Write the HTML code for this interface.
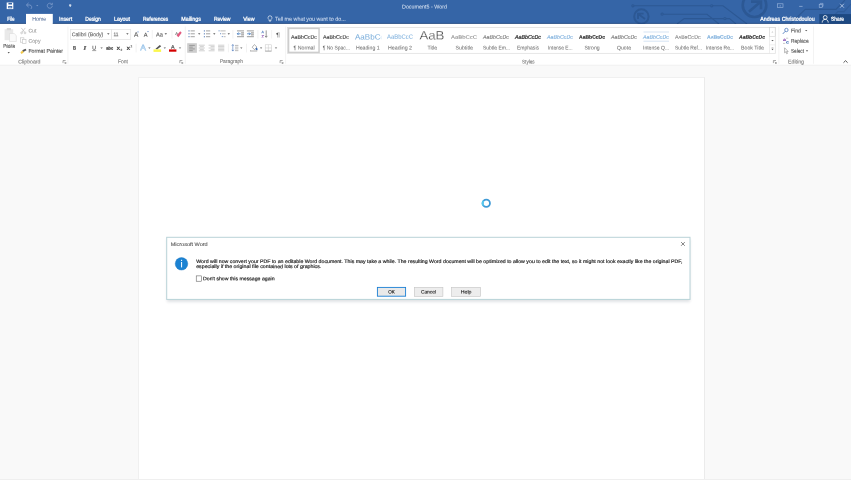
<!DOCTYPE html>
<html lang="en"><head><meta charset="utf-8"><title>Document5 - Word</title>
<style>
html,body{margin:0;padding:0;background:#f9f9f9;overflow:hidden}
svg{display:block;font-family:"Liberation Sans", sans-serif;will-change:transform;transform:translateZ(0)}
text{white-space:pre}
</style></head><body>
<svg width="851" height="480" viewBox="0 0 851 480">
<rect x="0.00" y="0.00" width="851.00" height="480.00" fill="#f9f9f9" />
<rect x="0.00" y="0.00" width="851.00" height="23.70" fill="#3565a7" />
<g fill="none" stroke="#2c5894" stroke-width="1.1">
<circle cx="632.9" cy="5.8" r="1.1"/>
<path d="M634.1 5.8H710.5M712.9 5.8H723L747 24"/>
<circle cx="711.7" cy="5.8" r="1.1"/>
<circle cx="641.4" cy="16.5" r="7.2" stroke-width="2"/>
<path d="M645 19L638.6 14.2M638 19V13.6H643.6" stroke-width="1.9"/>
<circle cx="662.1" cy="14.1" r="1.1"/>
<path d="M663.3 14.3H707L719 24"/>
<path d="M677 24L684.2 18.6H723.7M726.1 18.6H729.5L736 24"/>
<circle cx="724.9" cy="18.6" r="1.1"/>
<circle cx="754.5" cy="5.2" r="11.8" stroke-width="2.6"/>
<path d="M748.9 11.7L760 2.2M751 1.6H761V9.2" stroke-width="2.6"/>
<path d="M790 24L805.3 9.4H835.9L845 0"/>
<path d="M851 4L844 11.6H838L826 24" opacity="0.7"/>
</g>
<rect x="819.30" y="14.10" width="32.00" height="9.90" fill="#1d4982" />
<rect x="26.00" y="13.90" width="26.80" height="10.50" fill="#fff" />
<rect x="0.00" y="24.00" width="851.00" height="41.00" fill="#fff" />
<line x1="0.00" y1="23.40" x2="26.00" y2="23.40" stroke="#2a4d80" stroke-width="0.8" />
<line x1="52.80" y1="23.40" x2="851.00" y2="23.40" stroke="#2a4d80" stroke-width="0.8" />
<line x1="0.00" y1="65.20" x2="851.00" y2="65.20" stroke="#efefef" stroke-width="0.8" />
<rect x="6.70" y="2.50" width="6.60" height="6.60" fill="#fff" />
<rect x="8.40" y="3.00" width="3.60" height="1.50" fill="#3565a7" />
<rect x="8.20" y="6.00" width="4.00" height="2.30" fill="#3565a7" />
<rect x="8.90" y="6.90" width="2.60" height="0.50" fill="#fff" />
<path d="M28.6 2.9L26.4 5L28.6 7.1M26.6 5H29.8a2.2 2.2 0 0 1 1.1 3.9" fill="none" stroke="#7d9ccc" stroke-width="0.85" />
<path d="M36.11 4.95h2.175l-1.09 1.35z" fill="#7d9ccc" />
<path d="M51.6 4 A2.5 2.5 0 1 0 52.3 5.8" fill="none" stroke="#7d9ccc" stroke-width="0.8" />
<path d="M52.3 2.8V4.6H50.5" fill="none" stroke="#7d9ccc" stroke-width="0.8" />
<line x1="69.20" y1="4.60" x2="71.20" y2="4.60" stroke="#fff" stroke-width="0.6" />
<path d="M68.82 5.37h2.755l-1.38 1.71z" fill="#fff" />
<text x="7.30" y="20.80" font-size="5.6" fill="#fff" textLength="7.30" lengthAdjust="spacingAndGlyphs" transform="matrix(1 0.001 0 1 0 -0.0109)" stroke="#fff" stroke-width="0.25" >File</text>
<text x="32.20" y="20.80" font-size="5.6" fill="#3f5c8c" textLength="14.10" lengthAdjust="spacingAndGlyphs" transform="matrix(1 0.001 0 1 0 -0.0393)" >Home</text>
<text x="59.00" y="20.80" font-size="5.6" fill="#fff" textLength="13.20" lengthAdjust="spacingAndGlyphs" transform="matrix(1 0.001 0 1 0 -0.0656)" stroke="#fff" stroke-width="0.25" >Insert</text>
<text x="85.30" y="20.80" font-size="5.6" fill="#fff" textLength="15.60" lengthAdjust="spacingAndGlyphs" transform="matrix(1 0.001 0 1 0 -0.0931)" stroke="#fff" stroke-width="0.25" >Design</text>
<text x="113.90" y="20.80" font-size="5.6" fill="#fff" textLength="16.20" lengthAdjust="spacingAndGlyphs" transform="matrix(1 0.001 0 1 0 -0.1220)" stroke="#fff" stroke-width="0.25" >Layout</text>
<text x="143.00" y="20.80" font-size="5.6" fill="#fff" textLength="25.20" lengthAdjust="spacingAndGlyphs" transform="matrix(1 0.001 0 1 0 -0.1556)" stroke="#fff" stroke-width="0.25" >References</text>
<text x="181.20" y="20.80" font-size="5.6" fill="#fff" textLength="19.70" lengthAdjust="spacingAndGlyphs" transform="matrix(1 0.001 0 1 0 -0.1911)" stroke="#fff" stroke-width="0.25" >Mailings</text>
<text x="213.90" y="20.80" font-size="5.6" fill="#fff" textLength="16.60" lengthAdjust="spacingAndGlyphs" transform="matrix(1 0.001 0 1 0 -0.2222)" stroke="#fff" stroke-width="0.25" >Review</text>
<text x="243.20" y="20.80" font-size="5.6" fill="#fff" textLength="11.30" lengthAdjust="spacingAndGlyphs" transform="matrix(1 0.001 0 1 0 -0.2488)" stroke="#fff" stroke-width="0.25" >View</text>
<path d="M270 15.8a1.9 1.9 0 0 1 1.1 3.5v1.2h-2.2v-1.2a1.9 1.9 0 0 1 1.1-3.5z" fill="none" stroke="#fff" stroke-width="0.6" />
<line x1="269.20" y1="21.40" x2="270.80" y2="21.40" stroke="#fff" stroke-width="0.5" />
<text x="275.10" y="20.80" font-size="5.6" fill="#c6d5ec" textLength="70.60" lengthAdjust="spacingAndGlyphs" transform="matrix(1 0.001 0 1 0 -0.3104)" stroke="#c6d5ec" stroke-width="0.12" >Tell me what you want to do...</text>
<text x="402.00" y="8.50" font-size="5.5" fill="#e6edf8" textLength="45.00" lengthAdjust="spacingAndGlyphs" transform="matrix(1 0.001 0 1 0 -0.4245)" >Document5 - Word</text>
<text x="760.30" y="20.80" font-size="5.6" fill="#fff" textLength="54.40" lengthAdjust="spacingAndGlyphs" transform="matrix(1 0.001 0 1 0 -0.7875)" stroke="#fff" stroke-width="0.25" >Andreas Christodoulou</text>
<circle cx="825.2" cy="17.4" r="1.9" fill="none" stroke="#fff" stroke-width="0.8"/>
<path d="M822.2 22.6c0-2.2 1.3-3.2 3-3.2s3 1 3 3.2" fill="none" stroke="#fff" stroke-width="0.8" />
<text x="831.00" y="20.80" font-size="5.6" fill="#fff" textLength="13.00" lengthAdjust="spacingAndGlyphs" transform="matrix(1 0.001 0 1 0 -0.8375)" stroke="#fff" stroke-width="0.25" >Share</text>
<rect x="777.30" y="3.80" width="5.70" height="3.60" fill="none" stroke="#9fb9e0" stroke-width="0.6" />
<path d="M779.2 6.3l1-1.1 1 1.1z" fill="#9fb9e0" />
<line x1="799.20" y1="6.40" x2="802.60" y2="6.40" stroke="#9fb9e0" stroke-width="0.7" />
<rect x="819.20" y="4.30" width="3.00" height="3.10" fill="none" stroke="#9fb9e0" stroke-width="0.6" />
<path d="M820.2 4.3V3.4H823V6.4H822.2" fill="none" stroke="#9fb9e0" stroke-width="0.6" />
<path d="M840.1 3.8L843.9 7.7M843.9 3.8L840.1 7.7" fill="none" stroke="#d4e0f3" stroke-width="0.7" />
<rect x="4.60" y="29.20" width="8.60" height="11.00" fill="#e9e9e9" />
<rect x="6.80" y="28.00" width="4.20" height="2.20" fill="#d8d8d8" />
<path d="M9.5 33.5H14.2L16.3 35.6V41.5H9.5Z" fill="#fafafa" stroke="#dcdcdc" stroke-width="0.6" />
<text x="3.20" y="47.80" font-size="5.4" fill="#484848" textLength="11.80" lengthAdjust="spacingAndGlyphs" transform="matrix(1 0.001 0 1 0 -0.0091)" stroke="#484848" stroke-width="0.1" >Paste</text>
<path d="M7.61 52.05h2.175l-1.09 1.35z" fill="#5a5a5a" />
<path d="M21.3 27.9L24.6 32.2M25.3 27.9L22 32.2" fill="none" stroke="#b5b5b5" stroke-width="0.6" />
<circle cx="21.6" cy="32.9" r="0.9" fill="none" stroke="#b5b5b5" stroke-width="0.6"/>
<circle cx="25" cy="32.9" r="0.9" fill="none" stroke="#b5b5b5" stroke-width="0.6"/>
<text x="28.40" y="32.40" font-size="5.4" fill="#9a9a9a" textLength="8.00" lengthAdjust="spacingAndGlyphs" transform="matrix(1 0.001 0 1 0 -0.0324)" stroke="#9a9a9a" stroke-width="0.1" >Cut</text>
<rect x="20.30" y="37.80" width="3.60" height="4.40" fill="#fff" stroke="#c2c2c2" stroke-width="0.6" />
<rect x="22.40" y="39.40" width="3.60" height="4.20" fill="#fff" stroke="#c2c2c2" stroke-width="0.6" />
<text x="28.40" y="42.70" font-size="5.4" fill="#9a9a9a" textLength="12.10" lengthAdjust="spacingAndGlyphs" transform="matrix(1 0.001 0 1 0 -0.0345)" stroke="#9a9a9a" stroke-width="0.1" >Copy</text>
<path d="M22.2 50.2L25.6 48.7L26.5 50.3L23.2 52Z" fill="#555" />
<path d="M20.4 52.2L22.6 50.6L23.8 52.6L21.4 54Z" fill="#f2c94c" />
<text x="28.40" y="52.80" font-size="5.4" fill="#484848" textLength="34.60" lengthAdjust="spacingAndGlyphs" transform="matrix(1 0.001 0 1 0 -0.0457)" stroke="#484848" stroke-width="0.1" >Format Painter</text>
<text x="18.20" y="63.40" font-size="5.4" fill="#7a7a7a" textLength="22.30" lengthAdjust="spacingAndGlyphs" transform="matrix(1 0.001 0 1 0 -0.0294)" stroke="#7a7a7a" stroke-width="0.1" >Clipboard</text>
<path d="M63 63.1V60.5H65.6" fill="none" stroke="#6a6a6a" stroke-width="0.55" />
<path d="M64.2 61.7L65.8 63.3M65.9 62.1V63.4H64.6" fill="none" stroke="#6a6a6a" stroke-width="0.55" />
<line x1="67.90" y1="26.50" x2="67.90" y2="63.80" stroke="#f0f0f0" stroke-width="0.8" />
<rect x="70.40" y="29.60" width="41.10" height="9.90" fill="#fff" stroke="#e2e2e2" stroke-width="0.7" />
<rect x="111.50" y="29.60" width="19.20" height="9.90" fill="#fff" stroke="#e2e2e2" stroke-width="0.7" />
<text x="71.70" y="36.30" font-size="5.4" fill="#666" textLength="31.60" lengthAdjust="spacingAndGlyphs" transform="matrix(1 0.001 0 1 0 -0.0875)" stroke="#666" stroke-width="0.1" >Calibri (Body)</text>
<path d="M107.07 33.26h2.465l-1.23 1.53z" fill="#5a5a5a" />
<text x="113.50" y="36.30" font-size="5.4" fill="#666" textLength="5.00" lengthAdjust="spacingAndGlyphs" transform="matrix(1 0.001 0 1 0 -0.1160)" stroke="#666" stroke-width="0.1" >11</text>
<path d="M126.17 33.26h2.465l-1.23 1.53z" fill="#5a5a5a" />
<text x="133.90" y="36.80" font-size="6.6" fill="#555" textLength="4.30" lengthAdjust="spacingAndGlyphs" transform="matrix(1 0.001 0 1 0 -0.1361)" stroke="#555" stroke-width="0.1" >A</text>
<path d="M138 31.2l0.9 1h-1.8z" fill="#3b6cb5" />
<text x="143.80" y="36.80" font-size="5.6" fill="#555" textLength="3.80" lengthAdjust="spacingAndGlyphs" transform="matrix(1 0.001 0 1 0 -0.1457)" stroke="#555" stroke-width="0.1" >A</text>
<path d="M148 32.3l0.9-1h-1.8z" fill="#3b6cb5" />
<line x1="152.30" y1="30.00" x2="152.30" y2="38.50" stroke="#ececec" stroke-width="0.7" />
<text x="156.00" y="36.60" font-size="5.8" fill="#555" textLength="6.90" lengthAdjust="spacingAndGlyphs" transform="matrix(1 0.001 0 1 0 -0.1594)" stroke="#555" stroke-width="0.1" >Aa</text>
<path d="M164.57 33.26h2.465l-1.23 1.53z" fill="#5a5a5a" />
<line x1="172.00" y1="30.00" x2="172.00" y2="38.50" stroke="#ececec" stroke-width="0.7" />
<text x="175.20" y="35.00" font-size="4" fill="#666" textLength="2.80" lengthAdjust="spacingAndGlyphs" transform="matrix(1 0.001 0 1 0 -0.1766)" stroke="#666" stroke-width="0.1" >A</text>
<path d="M176.6 35.4L180.2 31.3L181.7 32.8L178.4 37.2Z" fill="#e2597f" />
<text x="72.90" y="49.70" font-size="5.5" fill="#444" textLength="3.10" lengthAdjust="spacingAndGlyphs" transform="matrix(1 0.001 0 1 0 -0.0745)" font-weight="bold" stroke="#444" stroke-width="0.15" >B</text>
<text x="83.40" y="49.70" font-size="5.5" fill="#444" textLength="2.60" lengthAdjust="spacingAndGlyphs" transform="matrix(1 0.001 0 1 0 -0.0847)" font-weight="bold" font-style="italic" stroke="#444" stroke-width="0.2" font-family="Liberation Serif, serif">I</text>
<text x="92.30" y="49.40" font-size="5.4" fill="#444" textLength="3.70" lengthAdjust="spacingAndGlyphs" transform="matrix(1 0.001 0 1 0 -0.0942)" stroke="#444" stroke-width="0.1" >U</text>
<line x1="92.20" y1="50.60" x2="96.20" y2="50.60" stroke="#444" stroke-width="0.5" />
<path d="M100.44 47.40h2.32l-1.16 1.44z" fill="#5a5a5a" />
<text x="106.20" y="49.80" font-size="4.8" fill="#444" textLength="6.80" lengthAdjust="spacingAndGlyphs" transform="matrix(1 0.001 0 1 0 -0.1096)" stroke="#444" stroke-width="0.25" >abc</text>
<line x1="106.00" y1="48.20" x2="113.20" y2="48.20" stroke="#444" stroke-width="0.4" />
<text x="116.80" y="49.80" font-size="5.4" fill="#444" textLength="3.20" lengthAdjust="spacingAndGlyphs" transform="matrix(1 0.001 0 1 0 -0.1184)" stroke="#444" stroke-width="0.3" >x</text>
<text x="120.40" y="51.00" font-size="3" fill="#444" textLength="1.80" lengthAdjust="spacingAndGlyphs" transform="matrix(1 0.001 0 1 0 -0.1213)" stroke="#444" stroke-width="0.1" >2</text>
<text x="126.80" y="49.80" font-size="5.4" fill="#444" textLength="3.20" lengthAdjust="spacingAndGlyphs" transform="matrix(1 0.001 0 1 0 -0.1284)" stroke="#444" stroke-width="0.3" >x</text>
<text x="130.40" y="47.40" font-size="3" fill="#444" textLength="1.80" lengthAdjust="spacingAndGlyphs" transform="matrix(1 0.001 0 1 0 -0.1313)" stroke="#444" stroke-width="0.1" >2</text>
<line x1="136.10" y1="43.80" x2="136.10" y2="52.40" stroke="#ececec" stroke-width="0.7" />
<text x="140.20" y="50.20" font-size="8.1" fill="#f4f9fe" textLength="5.70" lengthAdjust="spacingAndGlyphs" transform="matrix(1 0.001 0 1 0 -0.1431)" stroke="#8abbe6" stroke-width="0.45">A</text>
<path d="M148.24 47.40h2.32l-1.16 1.44z" fill="#5a5a5a" />
<path d="M155.5 48.8L159.8 44.9L161.2 46.2L157 49.6Z" fill="#555" />
<rect x="153.50" y="49.40" width="7.60" height="2.50" fill="#fbf74e" />
<path d="M163.64 47.40h2.32l-1.16 1.44z" fill="#5a5a5a" />
<text x="171.00" y="48.70" font-size="5.2" fill="#555" textLength="3.60" lengthAdjust="spacingAndGlyphs" transform="matrix(1 0.001 0 1 0 -0.1728)" stroke="#555" stroke-width="0.2" >A</text>
<rect x="169.00" y="49.40" width="7.40" height="2.30" fill="#d40000" />
<path d="M178.84 47.40h2.32l-1.16 1.44z" fill="#5a5a5a" />
<text x="118.00" y="63.30" font-size="5.4" fill="#7a7a7a" textLength="10.00" lengthAdjust="spacingAndGlyphs" transform="matrix(1 0.001 0 1 0 -0.1230)" stroke="#7a7a7a" stroke-width="0.1" >Font</text>
<path d="M179.8 63.1V60.5H182.4" fill="none" stroke="#6a6a6a" stroke-width="0.55" />
<path d="M181.0 61.7L182.60000000000002 63.3M182.70000000000002 62.1V63.4H181.4" fill="none" stroke="#6a6a6a" stroke-width="0.55" />
<line x1="185.30" y1="26.50" x2="185.30" y2="63.80" stroke="#f0f0f0" stroke-width="0.8" />
<rect x="188.50" y="30.40" width="1.00" height="1.00" fill="#2f5fa8" />
<rect x="188.50" y="33.30" width="1.00" height="1.00" fill="#2f5fa8" />
<rect x="188.50" y="36.20" width="1.00" height="1.00" fill="#2f5fa8" />
<line x1="190.60" y1="30.90" x2="194.80" y2="30.90" stroke="#555" stroke-width="0.55" />
<line x1="190.60" y1="33.80" x2="194.80" y2="33.80" stroke="#555" stroke-width="0.55" />
<line x1="190.60" y1="36.70" x2="194.80" y2="36.70" stroke="#555" stroke-width="0.55" />
<path d="M198.04 33.30h2.32l-1.16 1.44z" fill="#5a5a5a" />
<rect x="203.90" y="30.20" width="0.70" height="1.40" fill="#2f5fa8" />
<rect x="203.90" y="33.10" width="0.70" height="1.40" fill="#2f5fa8" />
<rect x="203.90" y="36.00" width="0.70" height="1.40" fill="#2f5fa8" />
<line x1="206.00" y1="30.90" x2="210.20" y2="30.90" stroke="#555" stroke-width="0.55" />
<line x1="206.00" y1="33.80" x2="210.20" y2="33.80" stroke="#555" stroke-width="0.55" />
<line x1="206.00" y1="36.70" x2="210.20" y2="36.70" stroke="#555" stroke-width="0.55" />
<path d="M213.14 33.30h2.32l-1.16 1.44z" fill="#5a5a5a" />
<rect x="218.60" y="30.40" width="0.90" height="0.90" fill="#3b6cb5" />
<rect x="220.20" y="33.30" width="0.90" height="0.90" fill="#3b6cb5" />
<rect x="221.80" y="36.20" width="0.90" height="0.90" fill="#3b6cb5" />
<line x1="220.40" y1="30.90" x2="225.60" y2="30.90" stroke="#777" stroke-width="0.5" />
<line x1="222.00" y1="33.80" x2="225.60" y2="33.80" stroke="#777" stroke-width="0.5" />
<line x1="223.60" y1="36.70" x2="225.60" y2="36.70" stroke="#777" stroke-width="0.5" />
<path d="M227.64 33.30h2.32l-1.16 1.44z" fill="#5a5a5a" />
<line x1="232.90" y1="30.00" x2="232.90" y2="38.50" stroke="#ececec" stroke-width="0.7" />
<line x1="237.00" y1="30.90" x2="244.00" y2="30.90" stroke="#555" stroke-width="0.6" />
<line x1="237.00" y1="36.70" x2="244.00" y2="36.70" stroke="#555" stroke-width="0.6" />
<rect x="241.10" y="31.90" width="2.90" height="3.80" fill="#d9d9d9" />
<line x1="241.10" y1="32.85" x2="244.00" y2="32.85" stroke="#777" stroke-width="0.5" />
<line x1="241.10" y1="34.75" x2="244.00" y2="34.75" stroke="#777" stroke-width="0.5" />
<path d="M240.6 33.8H237.3m1.3-1.3l-1.3 1.3 1.3 1.3" fill="none" stroke="#2f6db8" stroke-width="0.75" />
<line x1="246.90" y1="30.90" x2="253.90" y2="30.90" stroke="#555" stroke-width="0.6" />
<line x1="246.90" y1="36.70" x2="253.90" y2="36.70" stroke="#555" stroke-width="0.6" />
<rect x="251.00" y="31.90" width="2.90" height="3.80" fill="#d9d9d9" />
<line x1="251.00" y1="32.85" x2="253.90" y2="32.85" stroke="#777" stroke-width="0.5" />
<line x1="251.00" y1="34.75" x2="253.90" y2="34.75" stroke="#777" stroke-width="0.5" />
<path d="M247.1 33.8H250.4m-1.3-1.3l1.3 1.3-1.3 1.3" fill="none" stroke="#2f6db8" stroke-width="0.75" />
<line x1="257.90" y1="30.00" x2="257.90" y2="38.50" stroke="#ececec" stroke-width="0.7" />
<text x="261.40" y="33.20" font-size="3.4" fill="#3b6cb5" textLength="2.40" lengthAdjust="spacingAndGlyphs" transform="matrix(1 0.001 0 1 0 -0.2626)" stroke="#3b6cb5" stroke-width="0.1" >A</text>
<text x="261.40" y="37.60" font-size="3.4" fill="#8a4fb0" textLength="2.40" lengthAdjust="spacingAndGlyphs" transform="matrix(1 0.001 0 1 0 -0.2626)" stroke="#8a4fb0" stroke-width="0.1" >Z</text>
<path d="M266.2 30.4V37.2m-1.2-1.3l1.2 1.4 1.2-1.4" fill="none" stroke="#555" stroke-width="0.6" />
<line x1="271.60" y1="30.00" x2="271.60" y2="38.50" stroke="#ececec" stroke-width="0.7" />
<text x="276.00" y="36.80" font-size="6.0" fill="#555" textLength="4.10" lengthAdjust="spacingAndGlyphs" transform="matrix(1 0.001 0 1 0 -0.2781)" >¶</text>
<rect x="187.20" y="43.20" width="9.70" height="9.60" fill="#cdcdcd" />
<line x1="189.20" y1="45.40" x2="194.80" y2="45.40" stroke="#666" stroke-width="0.5" />
<line x1="189.20" y1="47.15" x2="192.80" y2="47.15" stroke="#666" stroke-width="0.5" />
<line x1="189.20" y1="48.90" x2="194.80" y2="48.90" stroke="#666" stroke-width="0.5" />
<line x1="189.20" y1="50.65" x2="192.80" y2="50.65" stroke="#666" stroke-width="0.5" />
<line x1="198.80" y1="45.20" x2="204.80" y2="45.20" stroke="#a8a8a8" stroke-width="0.55" />
<line x1="199.80" y1="46.60" x2="203.80" y2="46.60" stroke="#a8a8a8" stroke-width="0.55" />
<line x1="198.80" y1="48.00" x2="204.80" y2="48.00" stroke="#a8a8a8" stroke-width="0.55" />
<line x1="199.80" y1="49.40" x2="203.80" y2="49.40" stroke="#a8a8a8" stroke-width="0.55" />
<line x1="198.80" y1="50.80" x2="204.80" y2="50.80" stroke="#a8a8a8" stroke-width="0.55" />
<line x1="208.60" y1="45.20" x2="214.60" y2="45.20" stroke="#a8a8a8" stroke-width="0.55" />
<line x1="210.60" y1="46.60" x2="214.60" y2="46.60" stroke="#a8a8a8" stroke-width="0.55" />
<line x1="208.60" y1="48.00" x2="214.60" y2="48.00" stroke="#a8a8a8" stroke-width="0.55" />
<line x1="210.60" y1="49.40" x2="214.60" y2="49.40" stroke="#a8a8a8" stroke-width="0.55" />
<line x1="208.60" y1="50.80" x2="214.60" y2="50.80" stroke="#a8a8a8" stroke-width="0.55" />
<line x1="218.10" y1="45.20" x2="224.30" y2="45.20" stroke="#a8a8a8" stroke-width="0.55" />
<line x1="218.10" y1="46.60" x2="224.30" y2="46.60" stroke="#a8a8a8" stroke-width="0.55" />
<line x1="218.10" y1="48.00" x2="224.30" y2="48.00" stroke="#a8a8a8" stroke-width="0.55" />
<line x1="218.10" y1="49.40" x2="224.30" y2="49.40" stroke="#a8a8a8" stroke-width="0.55" />
<line x1="218.10" y1="50.80" x2="224.30" y2="50.80" stroke="#a8a8a8" stroke-width="0.55" />
<line x1="228.40" y1="43.80" x2="228.40" y2="52.40" stroke="#ececec" stroke-width="0.7" />
<path d="M232.8 44.6v6.4m-1-5.2l1-1.3 1 1.3m-2 4l1 1.3 1-1.3" fill="none" stroke="#3b6cb5" stroke-width="0.55" />
<line x1="235.00" y1="45.40" x2="238.40" y2="45.40" stroke="#777" stroke-width="0.5" />
<line x1="235.00" y1="47.15" x2="238.40" y2="47.15" stroke="#777" stroke-width="0.5" />
<line x1="235.00" y1="48.90" x2="238.40" y2="48.90" stroke="#777" stroke-width="0.5" />
<line x1="235.00" y1="50.65" x2="238.40" y2="50.65" stroke="#777" stroke-width="0.5" />
<path d="M240.14 47.40h2.32l-1.16 1.44z" fill="#5a5a5a" />
<line x1="246.50" y1="43.80" x2="246.50" y2="52.40" stroke="#ececec" stroke-width="0.7" />
<path d="M252.2 47.2L254.4 44.6L257 47.2L254.4 49.6Z" fill="#fff" stroke="#666" stroke-width="0.5" />
<path d="M256.6 47.4c0.7 0.9 1 1.4 1 1.9a1 1 0 0 1-2 0c0-.5.3-1 1-1.9z" fill="#3b6cb5" />
<rect x="250.40" y="50.20" width="6.60" height="1.40" fill="#fff" stroke="#999" stroke-width="0.4" />
<path d="M259.94 47.40h2.32l-1.16 1.44z" fill="#5a5a5a" />
<rect x="265.20" y="44.80" width="6.30" height="6.30" fill="none" stroke="#c5c5c5" stroke-width="0.5" />
<line x1="268.35" y1="44.80" x2="268.35" y2="51.10" stroke="#c5c5c5" stroke-width="0.5" />
<line x1="265.20" y1="47.95" x2="271.50" y2="47.95" stroke="#c5c5c5" stroke-width="0.5" />
<line x1="265.20" y1="51.10" x2="271.50" y2="51.10" stroke="#888" stroke-width="0.6" />
<path d="M274.84 47.40h2.32l-1.16 1.44z" fill="#5a5a5a" />
<text x="219.80" y="62.90" font-size="5.4" fill="#7a7a7a" textLength="23.20" lengthAdjust="spacingAndGlyphs" transform="matrix(1 0.001 0 1 0 -0.2314)" stroke="#7a7a7a" stroke-width="0.1" >Paragraph</text>
<path d="M280.1 63.1V60.5H282.70000000000005" fill="none" stroke="#6a6a6a" stroke-width="0.55" />
<path d="M281.3 61.7L282.90000000000003 63.3M283.0 62.1V63.4H281.70000000000005" fill="none" stroke="#6a6a6a" stroke-width="0.55" />
<line x1="285.60" y1="26.50" x2="285.60" y2="63.80" stroke="#f0f0f0" stroke-width="0.8" />
<rect x="287.60" y="27.60" width="487.60" height="25.70" fill="#fff" stroke="#dcdcdc" stroke-width="0.7" />
<rect x="288.55" y="28.40" width="30.50" height="24.00" fill="#fff" stroke="#cdcdcd" stroke-width="1.5" />
<text x="291.00" y="38.70" font-size="5.2" fill="#3a3a3a" textLength="26.00" lengthAdjust="spacingAndGlyphs" transform="matrix(1 0.001 0 1 0 -0.3040)" stroke="#3a3a3a" stroke-width="0.12" >AaBbCcDc</text>
<text x="293.40" y="49.50" font-size="5.4" fill="#727272" textLength="21.20" lengthAdjust="spacingAndGlyphs" transform="matrix(1 0.001 0 1 0 -0.3040)" stroke="#727272" stroke-width="0.05" >¶ Normal</text>
<text x="323.00" y="38.70" font-size="5.2" fill="#3a3a3a" textLength="26.00" lengthAdjust="spacingAndGlyphs" transform="matrix(1 0.001 0 1 0 -0.3360)" stroke="#3a3a3a" stroke-width="0.12" >AaBbCcDc</text>
<text x="322.70" y="49.50" font-size="5.4" fill="#727272" textLength="27.30" lengthAdjust="spacingAndGlyphs" transform="matrix(1 0.001 0 1 0 -0.3364)" stroke="#727272" stroke-width="0.05" >¶ No Spac...</text>
<clipPath id="c2"><rect x="353.0" y="28" width="28.2" height="14"/></clipPath><g clip-path="url(#c2)">
<text x="355.00" y="39.60" font-size="7.6" fill="#7fb0dd" textLength="29.50" lengthAdjust="spacingAndGlyphs" transform="matrix(1 0.001 0 1 0 -0.3698)" stroke="#7fb0dd" stroke-width="0.05" >AaBbCc</text>
</g>
<text x="356.00" y="49.50" font-size="5.4" fill="#727272" textLength="23.60" lengthAdjust="spacingAndGlyphs" transform="matrix(1 0.001 0 1 0 -0.3678)" stroke="#727272" stroke-width="0.05" >Heading 1</text>
<text x="387.00" y="38.70" font-size="6.2" fill="#7fb0dd" textLength="26.00" lengthAdjust="spacingAndGlyphs" transform="matrix(1 0.001 0 1 0 -0.4000)" stroke="#7fb0dd" stroke-width="0.03" >AaBbCcC</text>
<text x="388.00" y="49.50" font-size="5.4" fill="#727272" textLength="24.00" lengthAdjust="spacingAndGlyphs" transform="matrix(1 0.001 0 1 0 -0.4000)" stroke="#727272" stroke-width="0.05" >Heading 2</text>
<text x="419.40" y="39.60" font-size="12.2" fill="#333" textLength="25.00" lengthAdjust="spacingAndGlyphs" transform="matrix(1 0.001 0 1 0 -0.4319)" stroke="#fff" stroke-width="0.3">AaB</text>
<text x="427.50" y="49.50" font-size="5.4" fill="#727272" textLength="9.50" lengthAdjust="spacingAndGlyphs" transform="matrix(1 0.001 0 1 0 -0.4323)" stroke="#727272" stroke-width="0.05" >Title</text>
<text x="451.00" y="38.70" font-size="5" fill="#858585" textLength="26.00" lengthAdjust="spacingAndGlyphs" transform="matrix(1 0.001 0 1 0 -0.4640)" stroke="#858585" stroke-width="0.05" >AaBbCcC</text>
<text x="455.60" y="49.50" font-size="5.4" fill="#727272" textLength="17.40" lengthAdjust="spacingAndGlyphs" transform="matrix(1 0.001 0 1 0 -0.4643)" stroke="#727272" stroke-width="0.05" >Subtitle</text>
<text x="483.00" y="38.70" font-size="5.2" fill="#777" textLength="26.00" lengthAdjust="spacingAndGlyphs" transform="matrix(1 0.001 0 1 0 -0.4960)" font-style="italic" stroke="#777" stroke-width="0.12" >AaBbCcDc</text>
<text x="483.00" y="49.50" font-size="5.4" fill="#727272" textLength="27.00" lengthAdjust="spacingAndGlyphs" transform="matrix(1 0.001 0 1 0 -0.4965)" stroke="#727272" stroke-width="0.05" >Subtle Em...</text>
<text x="515.00" y="38.70" font-size="5.2" fill="#444" textLength="26.00" lengthAdjust="spacingAndGlyphs" transform="matrix(1 0.001 0 1 0 -0.5280)" font-style="italic" stroke="#444" stroke-width="0.3" >AaBbCcDc</text>
<text x="517.00" y="49.50" font-size="5.4" fill="#727272" textLength="22.00" lengthAdjust="spacingAndGlyphs" transform="matrix(1 0.001 0 1 0 -0.5280)" stroke="#727272" stroke-width="0.05" >Emphasis</text>
<text x="547.00" y="38.70" font-size="5.2" fill="#7fb0dd" textLength="26.00" lengthAdjust="spacingAndGlyphs" transform="matrix(1 0.001 0 1 0 -0.5600)" font-style="italic" stroke="#7fb0dd" stroke-width="0.12" >AaBbCcDc</text>
<text x="548.00" y="49.50" font-size="5.4" fill="#727272" textLength="24.50" lengthAdjust="spacingAndGlyphs" transform="matrix(1 0.001 0 1 0 -0.5603)" stroke="#727272" stroke-width="0.05" >Intense E...</text>
<text x="579.00" y="38.70" font-size="5.2" fill="#222" textLength="26.00" lengthAdjust="spacingAndGlyphs" transform="matrix(1 0.001 0 1 0 -0.5920)" font-weight="bold" stroke="#222" stroke-width="0.12" >AaBbCcDc</text>
<text x="584.50" y="49.50" font-size="5.4" fill="#727272" textLength="15.20" lengthAdjust="spacingAndGlyphs" transform="matrix(1 0.001 0 1 0 -0.5921)" stroke="#727272" stroke-width="0.05" >Strong</text>
<text x="611.00" y="38.70" font-size="5.2" fill="#777" textLength="26.00" lengthAdjust="spacingAndGlyphs" transform="matrix(1 0.001 0 1 0 -0.6240)" font-style="italic" stroke="#777" stroke-width="0.12" >AaBbCcDc</text>
<text x="617.00" y="49.50" font-size="5.4" fill="#727272" textLength="14.00" lengthAdjust="spacingAndGlyphs" transform="matrix(1 0.001 0 1 0 -0.6240)" stroke="#727272" stroke-width="0.05" >Quote</text>
<text x="643.00" y="38.70" font-size="5.2" fill="#7fb0dd" textLength="26.00" lengthAdjust="spacingAndGlyphs" transform="matrix(1 0.001 0 1 0 -0.6560)" font-style="italic" stroke="#7fb0dd" stroke-width="0.12" >AaBbCcDc</text>
<text x="643.00" y="49.50" font-size="5.4" fill="#727272" textLength="26.00" lengthAdjust="spacingAndGlyphs" transform="matrix(1 0.001 0 1 0 -0.6560)" stroke="#727272" stroke-width="0.05" >Intense Q...</text>
<text x="675.00" y="38.70" font-size="5.2" fill="#888" textLength="26.00" lengthAdjust="spacingAndGlyphs" transform="matrix(1 0.001 0 1 0 -0.6880)" stroke="#888" stroke-width="0.12" >A<tspan font-size="3.9">A</tspan>B<tspan font-size="3.9">B</tspan>C<tspan font-size="3.9">C</tspan>D<tspan font-size="3.9">C</tspan></text>
<text x="675.00" y="49.50" font-size="5.4" fill="#727272" textLength="27.00" lengthAdjust="spacingAndGlyphs" transform="matrix(1 0.001 0 1 0 -0.6885)" stroke="#727272" stroke-width="0.05" >Subtle Ref...</text>
<text x="707.00" y="38.70" font-size="5.2" fill="#7fb0dd" textLength="26.00" lengthAdjust="spacingAndGlyphs" transform="matrix(1 0.001 0 1 0 -0.7200)" font-weight="bold" stroke="#7fb0dd" stroke-width="0.12" >A<tspan font-size="3.9">A</tspan>B<tspan font-size="3.9">B</tspan>C<tspan font-size="3.9">C</tspan>D<tspan font-size="3.9">C</tspan></text>
<text x="706.00" y="49.50" font-size="5.4" fill="#727272" textLength="28.00" lengthAdjust="spacingAndGlyphs" transform="matrix(1 0.001 0 1 0 -0.7200)" stroke="#727272" stroke-width="0.05" >Intense Re...</text>
<text x="739.00" y="38.70" font-size="5.2" fill="#222" textLength="26.00" lengthAdjust="spacingAndGlyphs" transform="matrix(1 0.001 0 1 0 -0.7520)" font-weight="bold" font-style="italic" stroke="#222" stroke-width="0.12" >AaBbCcDc</text>
<text x="741.00" y="49.50" font-size="5.4" fill="#727272" textLength="23.00" lengthAdjust="spacingAndGlyphs" transform="matrix(1 0.001 0 1 0 -0.7525)" stroke="#727272" stroke-width="0.05" >Book Title</text>
<line x1="643.50" y1="32.00" x2="669.00" y2="32.00" stroke="#a9c7e6" stroke-width="0.5" />
<line x1="643.50" y1="41.20" x2="669.00" y2="41.20" stroke="#a9c7e6" stroke-width="0.5" />
<rect x="769.40" y="27.60" width="5.80" height="25.70" fill="#fff" stroke="#e4e4e4" stroke-width="0.6" />
<rect x="769.40" y="27.60" width="5.80" height="8.90" fill="#fff" stroke="#d2d2d2" stroke-width="0.6" />
<line x1="769.40" y1="44.80" x2="775.20" y2="44.80" stroke="#e4e4e4" stroke-width="0.6" />
<path d="M771.4 32.4l1-1.1 1 1.1z" fill="#c4c4c4" />
<path d="M771.34 39.90h2.32l-1.16 1.44z" fill="#5a5a5a" />
<line x1="771.60" y1="47.60" x2="773.40" y2="47.60" stroke="#777" stroke-width="0.4" />
<path d="M771.34 48.70h2.32l-1.16 1.44z" fill="#5a5a5a" />
<text x="522.00" y="63.40" font-size="5.4" fill="#7a7a7a" textLength="12.70" lengthAdjust="spacingAndGlyphs" transform="matrix(1 0.001 0 1 0 -0.5283)" stroke="#7a7a7a" stroke-width="0.1" >Styles</text>
<path d="M773.4 63.1V60.5H776.0" fill="none" stroke="#6a6a6a" stroke-width="0.55" />
<path d="M774.6 61.7L776.1999999999999 63.3M776.3 62.1V63.4H775.0" fill="none" stroke="#6a6a6a" stroke-width="0.55" />
<line x1="778.80" y1="26.50" x2="778.80" y2="63.80" stroke="#f0f0f0" stroke-width="0.8" />
<circle cx="786.4" cy="30" r="1.7" fill="none" stroke="#3b6cb5" stroke-width="0.7"/>
<line x1="785.20" y1="31.30" x2="782.80" y2="33.90" stroke="#3b6cb5" stroke-width="0.8" />
<text x="791.00" y="32.40" font-size="5.4" fill="#484848" textLength="9.80" lengthAdjust="spacingAndGlyphs" transform="matrix(1 0.001 0 1 0 -0.7959)" stroke="#484848" stroke-width="0.1" >Find</text>
<path d="M805.04 29.90h2.32l-1.16 1.44z" fill="#5a5a5a" />
<text x="783.00" y="41.00" font-size="4" fill="#8a4fb0" textLength="3.00" lengthAdjust="spacingAndGlyphs" transform="matrix(1 0.001 0 1 0 -0.7845)" font-weight="bold" stroke="#8a4fb0" stroke-width="0.1" >a</text>
<text x="786.00" y="43.60" font-size="4" fill="#3b6cb5" textLength="3.00" lengthAdjust="spacingAndGlyphs" transform="matrix(1 0.001 0 1 0 -0.7875)" font-weight="bold" stroke="#3b6cb5" stroke-width="0.1" >c</text>
<path d="M783 43.4h2.2m3-5.2h-2.2" fill="none" stroke="#777" stroke-width="0.4" />
<text x="791.00" y="42.70" font-size="5.4" fill="#484848" textLength="17.70" lengthAdjust="spacingAndGlyphs" transform="matrix(1 0.001 0 1 0 -0.7999)" stroke="#484848" stroke-width="0.1" >Replace</text>
<path d="M784.6 47.8v5l1.2-1 .9 2 .8-.4-.9-1.9h1.6z" fill="#fff" stroke="#666" stroke-width="0.45" />
<text x="791.00" y="52.80" font-size="5.4" fill="#484848" textLength="13.00" lengthAdjust="spacingAndGlyphs" transform="matrix(1 0.001 0 1 0 -0.7975)" stroke="#484848" stroke-width="0.1" >Select</text>
<path d="M805.84 50.30h2.32l-1.16 1.44z" fill="#5a5a5a" />
<text x="788.00" y="63.40" font-size="5.4" fill="#7a7a7a" textLength="16.00" lengthAdjust="spacingAndGlyphs" transform="matrix(1 0.001 0 1 0 -0.7960)" stroke="#7a7a7a" stroke-width="0.1" >Editing</text>
<line x1="813.50" y1="26.50" x2="813.50" y2="63.80" stroke="#f0f0f0" stroke-width="0.8" />
<path d="M843.5 62.7l2.05-2 2.05 2" fill="none" stroke="#444" stroke-width="0.9" />
<rect x="138.50" y="77.50" width="566.00" height="403.00" fill="#fff" stroke="#f0f0f0" stroke-width="1" />
<line x1="704.50" y1="77.50" x2="704.50" y2="480.00" stroke="#ebebeb" stroke-width="1" />
<line x1="0.00" y1="479.50" x2="851.00" y2="479.50" stroke="#efefef" stroke-width="1" />
<circle cx="486.3" cy="203.3" r="3.65" fill="none" stroke="#3f9ad6" stroke-width="1.8"/>
<path d="M483.4 205.6A3.65 3.65 0 0 1 483.6 200.8" fill="none" stroke="#55c8ee" stroke-width="1.8"/>
<defs><filter id="sh" x="-5%" y="-20%" width="110%" height="150%"><feGaussianBlur stdDeviation="1.6"/></filter></defs>
<rect x="167.00" y="239.50" width="523.00" height="62.30" fill="#234" opacity="0.15" filter="url(#sh)"/>
<rect x="166.70" y="237.30" width="523.30" height="62.10" fill="#fff" stroke="#b9d3d8" stroke-width="1.0" />
<text x="170.70" y="246.00" font-size="5.2" fill="#555" textLength="37.00" lengthAdjust="spacingAndGlyphs" transform="matrix(1 0.001 0 1 0 -0.1892)" stroke="#555" stroke-width="0.1" >Microsoft Word</text>
<path d="M681.1 242.1L684.8 245.8M684.8 242.1L681.1 245.8" fill="none" stroke="#333" stroke-width="0.6" />
<circle cx="181.5" cy="263.8" r="6.3" fill="#1b82d2" stroke="#1873bd" stroke-width="0.4"/>
<rect x="181.00" y="262.00" width="1.10" height="5.40" fill="#eaf6ff" />
<rect x="181.00" y="259.80" width="1.10" height="1.20" fill="#eaf6ff" />
<text x="196.20" y="262.95" font-size="4.9" fill="#242424" textLength="87.35" lengthAdjust="spacingAndGlyphs" transform="matrix(1 0.001 0 1 0 -0.2399)" stroke="#242424" stroke-width="0.17" >Word will now convert your PDF to an</text>
<text x="285.01" y="262.95" font-size="4.9" fill="#242424" textLength="80.58" lengthAdjust="spacingAndGlyphs" transform="matrix(1 0.001 0 1 0 -0.3253)" stroke="#242424" stroke-width="0.17" >editable Word document. This may</text>
<text x="367.04" y="262.95" font-size="4.9" fill="#242424" textLength="74.48" lengthAdjust="spacingAndGlyphs" transform="matrix(1 0.001 0 1 0 -0.4043)" stroke="#242424" stroke-width="0.17" >take a while. The resulting Word</text>
<text x="442.97" y="262.95" font-size="4.9" fill="#242424" textLength="81.94" lengthAdjust="spacingAndGlyphs" transform="matrix(1 0.001 0 1 0 -0.4839)" stroke="#242424" stroke-width="0.17" >document will be optimized to allow</text>
<text x="526.37" y="262.95" font-size="4.9" fill="#242424" textLength="89.21" lengthAdjust="spacingAndGlyphs" transform="matrix(1 0.001 0 1 0 -0.5710)" stroke="#242424" stroke-width="0.17" >you to edit the text, so it might not look</text>
<text x="617.03" y="262.95" font-size="4.9" fill="#242424" textLength="65.37" lengthAdjust="spacingAndGlyphs" transform="matrix(1 0.001 0 1 0 -0.6497)" stroke="#242424" stroke-width="0.17" >exactly like the original PDF,</text>
<text x="196.20" y="268.10" font-size="4.9" fill="#242424" textLength="86.81" lengthAdjust="spacingAndGlyphs" transform="matrix(1 0.001 0 1 0 -0.2396)" stroke="#242424" stroke-width="0.17" >especially if the original file contained</text>
<text x="284.47" y="268.10" font-size="4.9" fill="#242424" textLength="36.83" lengthAdjust="spacingAndGlyphs" transform="matrix(1 0.001 0 1 0 -0.3029)" stroke="#242424" stroke-width="0.17" >lots of graphics.</text>
<rect x="196.20" y="275.90" width="5.30" height="5.30" fill="#fff" stroke="#4a4a4a" stroke-width="0.5" />
<text x="203.00" y="280.25" font-size="4.9" fill="#242424" textLength="71.60" lengthAdjust="spacingAndGlyphs" transform="matrix(1 0.001 0 1 0 -0.2388)" stroke="#242424" stroke-width="0.17" >Don&#x27;t show this message again</text>
<rect x="377.40" y="287.40" width="28.20" height="8.80" fill="#e9e9e9" stroke="#1a7fd4" stroke-width="0.9" />
<rect x="414.30" y="287.30" width="28.60" height="9.00" fill="#ededed" stroke="#c4c4c4" stroke-width="0.6" />
<rect x="451.60" y="287.30" width="29.00" height="9.00" fill="#ededed" stroke="#c4c4c4" stroke-width="0.6" />
<text x="388.30" y="293.50" font-size="4.9" fill="#111" textLength="6.60" lengthAdjust="spacingAndGlyphs" transform="matrix(1 0.001 0 1 0 -0.3916)" stroke="#111" stroke-width="0.1" >OK</text>
<text x="420.90" y="293.50" font-size="4.9" fill="#111" textLength="15.10" lengthAdjust="spacingAndGlyphs" transform="matrix(1 0.001 0 1 0 -0.4284)" stroke="#111" stroke-width="0.1" >Cancel</text>
<text x="460.70" y="293.50" font-size="4.9" fill="#111" textLength="10.80" lengthAdjust="spacingAndGlyphs" transform="matrix(1 0.001 0 1 0 -0.4661)" stroke="#111" stroke-width="0.1" >Help</text>
</svg>
</body></html>
